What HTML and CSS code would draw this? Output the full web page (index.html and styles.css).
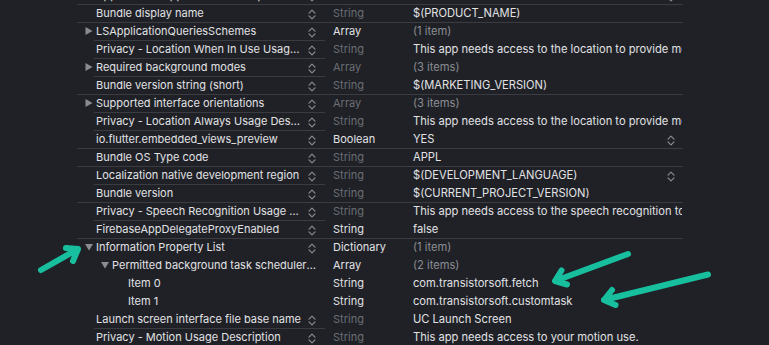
FILE: index.html
```html
<!DOCTYPE html>
<html lang="en">
<head>
<meta charset="utf-8">
<title>Info.plist</title>
<link rel="stylesheet" href="styles.css">
</head>
<body>
<svg width="0" height="0" class="defs" aria-hidden="true">
  <defs>
    <symbol id="step" viewBox="0 0 8 11">
      <path d="M1 4.2 L4 1.2 L7 4.2 M1 6.8 L4 9.8 L7 6.8" fill="none" stroke="#8b8c91" stroke-width="1.2" stroke-linecap="round" stroke-linejoin="round"/>
    </symbol>
    <symbol id="tri-r" viewBox="0 0 8 8">
      <path d="M0.5 0 L7.5 4 L0.5 8 Z" fill="#8b8c91"/>
    </symbol>
    <symbol id="tri-d" viewBox="0 0 8 8">
      <path d="M0 1 L8 1 L4 7.5 Z" fill="#8b8c91"/>
    </symbol>
  </defs>
</svg>
<div class="plist">
  <div class="row">
    <div class="key"><span class="tw"></span><span class="kt">Application supports indirect input events</span><svg class="st"><use href="#step"/></svg></div>
    <div class="tv"><span class="type hi">Boolean</span><span class="val"><span class="vt">YES</span><svg class="vst"><use href="#step"/></svg></span></div>
  </div>
  <div class="row lf">
    <div class="key"><span class="tw"></span><span class="kt">Bundle display name</span><svg class="st"><use href="#step"/></svg></div>
    <div class="tv"><span class="type">String</span><span class="val"><span class="vt">$(PRODUCT_NAME)</span></span></div>
  </div>
  <div class="row lf">
    <div class="key"><span class="tw"><svg class="tri"><use href="#tri-r"/></svg></span><span class="kt">LSApplicationQueriesSchemes</span><svg class="st"><use href="#step"/></svg></div>
    <div class="tv"><span class="type hi">Array</span><span class="val"><span class="vt cnt">(1 item)</span></span></div>
  </div>
  <div class="row lk">
    <div class="key"><span class="tw"></span><span class="kt">Privacy - Location When In Use Usage Description</span><svg class="st"><use href="#step"/></svg></div>
    <div class="tv"><span class="type">String</span><span class="val"><span class="vt">This app needs access to the location to provide more accurate tracking.</span></span></div>
  </div>
  <div class="row lk">
    <div class="key"><span class="tw"><svg class="tri"><use href="#tri-r"/></svg></span><span class="kt">Required background modes</span><svg class="st"><use href="#step"/></svg></div>
    <div class="tv"><span class="type">Array</span><span class="val"><span class="vt cnt">(3 items)</span></span></div>
  </div>
  <div class="row lk">
    <div class="key"><span class="tw"></span><span class="kt">Bundle version string (short)</span><svg class="st"><use href="#step"/></svg></div>
    <div class="tv"><span class="type">String</span><span class="val"><span class="vt">$(MARKETING_VERSION)</span></span></div>
  </div>
  <div class="row lf">
    <div class="key"><span class="tw"><svg class="tri"><use href="#tri-r"/></svg></span><span class="kt">Supported interface orientations</span><svg class="st"><use href="#step"/></svg></div>
    <div class="tv"><span class="type">Array</span><span class="val"><span class="vt cnt">(3 items)</span></span></div>
  </div>
  <div class="row lk">
    <div class="key"><span class="tw"></span><span class="kt">Privacy - Location Always Usage Description</span><svg class="st"><use href="#step"/></svg></div>
    <div class="tv"><span class="type">String</span><span class="val"><span class="vt">This app needs access to the location to provide more accurate tracking.</span></span></div>
  </div>
  <div class="row lk">
    <div class="key"><span class="tw"></span><span class="kt">io.flutter.embedded_views_preview</span><svg class="st"><use href="#step"/></svg></div>
    <div class="tv"><span class="type hi">Boolean</span><span class="val"><span class="vt">YES</span><svg class="vst"><use href="#step"/></svg></span></div>
  </div>
  <div class="row lf">
    <div class="key"><span class="tw"></span><span class="kt">Bundle OS Type code</span><svg class="st"><use href="#step"/></svg></div>
    <div class="tv"><span class="type">String</span><span class="val"><span class="vt">APPL</span></span></div>
  </div>
  <div class="row lf">
    <div class="key"><span class="tw"></span><span class="kt">Localization native development region</span><svg class="st"><use href="#step"/></svg></div>
    <div class="tv"><span class="type">String</span><span class="val"><span class="vt">$(DEVELOPMENT_LANGUAGE)</span><svg class="vst"><use href="#step"/></svg></span></div>
  </div>
  <div class="row lk">
    <div class="key"><span class="tw"></span><span class="kt">Bundle version</span><svg class="st"><use href="#step"/></svg></div>
    <div class="tv"><span class="type">String</span><span class="val"><span class="vt">$(CURRENT_PROJECT_VERSION)</span></span></div>
  </div>
  <div class="row lf">
    <div class="key"><span class="tw"></span><span class="kt">Privacy - Speech Recognition Usage Description</span><svg class="st"><use href="#step"/></svg></div>
    <div class="tv"><span class="type">String</span><span class="val"><span class="vt">This app needs access to the speech recognition to provide voice commands.</span></span></div>
  </div>
  <div class="row lk">
    <div class="key"><span class="tw"></span><span class="kt">FirebaseAppDelegateProxyEnabled</span><svg class="st"><use href="#step"/></svg></div>
    <div class="tv"><span class="type hi">String</span><span class="val"><span class="vt">false</span></span></div>
  </div>
  <div class="row lf">
    <div class="key"><span class="tw"><svg class="tri"><use href="#tri-d"/></svg></span><span class="kt">Information Property List</span><svg class="st"><use href="#step"/></svg></div>
    <div class="tv"><span class="type hi">Dictionary</span><span class="val"><span class="vt cnt">(1 item)</span></span></div>
  </div>
  <div class="row">
    <div class="key l1 nost"><span class="tw"><svg class="tri"><use href="#tri-d"/></svg></span><span class="kt">Permitted background task scheduler identifiers</span></div>
    <div class="tv"><span class="type hi">Array</span><span class="val"><span class="vt cnt">(2 items)</span></span></div>
  </div>
  <div class="row">
    <div class="key l2 nost"><span class="tw"></span><span class="kt">Item 0</span></div>
    <div class="tv"><span class="type hi">String</span><span class="val"><span class="vt">com.transistorsoft.fetch</span></span></div>
  </div>
  <div class="row">
    <div class="key l2 nost"><span class="tw"></span><span class="kt">Item 1</span></div>
    <div class="tv"><span class="type hi">String</span><span class="val"><span class="vt">com.transistorsoft.customtask</span></span></div>
  </div>
  <div class="row">
    <div class="key"><span class="tw"></span><span class="kt">Launch screen interface file base name</span><svg class="st"><use href="#step"/></svg></div>
    <div class="tv"><span class="type">String</span><span class="val"><span class="vt">UC Launch Screen</span></span></div>
  </div>
  <div class="row lk">
    <div class="key"><span class="tw"></span><span class="kt">Privacy - Motion Usage Description</span><svg class="st"><use href="#step"/></svg></div>
    <div class="tv"><span class="type">String</span><span class="val"><span class="vt">This app needs access to your motion use.</span></span></div>
  </div>
</div>
<svg class="arrows" width="769" height="345" viewBox="0 0 769 345" aria-hidden="true">
  <g fill="none" stroke="#17bf9f" stroke-width="6" stroke-linecap="round" stroke-linejoin="round">
    <path d="M41 270 L78 249 M66 248 L78 249 L73 261"/>
    <path d="M628 254 L555 281 M567 284.5 L555 281 L561.5 270.5"/>
    <path d="M708 274.5 L604 300 M615.5 305 L604 300 L612 290"/>
  </g>
</svg>
</body>
</html>
```

FILE: styles.css
```css
html, body {
  margin: 0;
  padding: 0;
  background: #1f2127;
  overflow: hidden;
}

body {
  width: 769px;
  height: 345px;
  position: relative;
  font-family: "Inter", "Liberation Sans", sans-serif;
  font-size: 11px;
  color: #e2e2e5;
}

.defs {
  position: absolute;
  width: 0;
  height: 0;
}

.plist {
  margin-top: -14px;
  padding-left: 77px;
}

.row {
  display: flex;
  height: 18px;
}

.key {
  width: 248px;
  box-sizing: border-box;
  display: flex;
  align-items: center;
  flex: none;
}

.key.nost {
  padding-right: 7px;
}

.key.l1 { padding-left: 16px; }
.key.l2 { padding-left: 32px; }

.tw {
  width: 19px;
  flex: none;
  display: flex;
  justify-content: flex-end;
  padding-right: 3px;
  box-sizing: border-box;
}

.tri {
  width: 8px;
  height: 8px;
}

.kt {
  flex: 1;
  min-width: 0;
  white-space: nowrap;
  overflow: hidden;
  text-overflow: ellipsis;
}

.st, .vst {
  width: 8px;
  height: 11px;
  flex: none;
  margin-top: 2px;
}

.st {
  margin-left: 6px;
  margin-right: 9px;
}

.tv {
  width: 358px;
  flex: none;
  display: flex;
  align-items: center;
}

.type {
  width: 88px;
  flex: none;
  box-sizing: border-box;
  padding-left: 8px;
  color: #6b6d72;
}

.type.hi {
  color: #e2e2e5;
}

.val {
  flex: 1;
  min-width: 0;
  display: flex;
  align-items: center;
  overflow: hidden;
  padding-right: 1px;
  font-size: 11.15px;
}

.vt {
  flex: 1;
  min-width: 0;
  white-space: nowrap;
  overflow: hidden;
}

.vt.cnt {
  color: #8c8d92;
}

.vst {
  margin-right: 7px;
}

.row.lf .key,
.row.lf .tv {
  background: linear-gradient(#3a3c42, #3a3c42) 0 0 / 100% 1px no-repeat;
}

.row.lk .key {
  background: linear-gradient(#3a3c42, #3a3c42) 17px 0 / calc(100% - 17px) 1px no-repeat;
}

.arrows {
  position: absolute;
  left: 0;
  top: 0;
  pointer-events: none;
}
```
